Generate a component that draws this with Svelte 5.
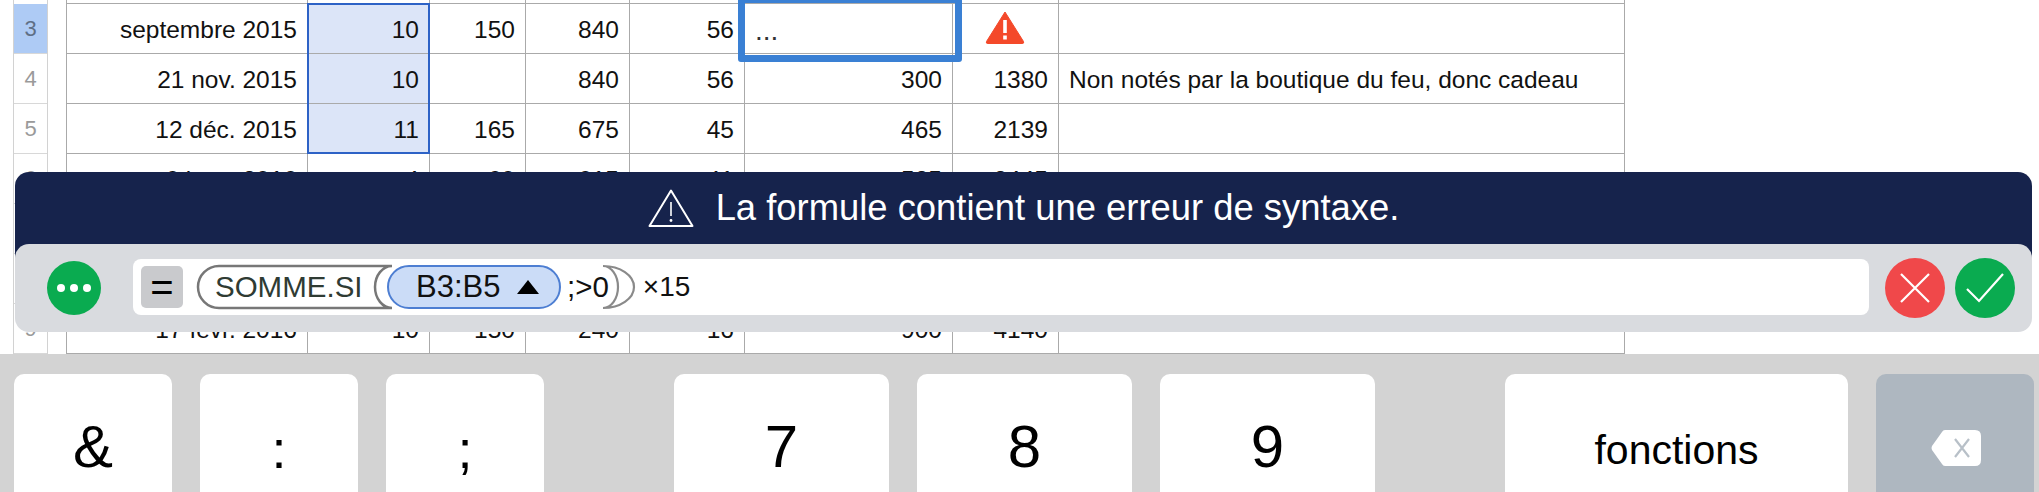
<script>
  const rows = [
    { n: 3, cells: ["septembre 2015", "10", "150", "840", "56", "", "", ""], active: true },
    { n: 4, cells: ["21 nov. 2015", "10", "", "840", "56", "300", "1380", "Non notés par la boutique du feu, donc cadeau"] },
    { n: 5, cells: ["12 déc. 2015", "11", "165", "675", "45", "465", "2139", ""] },
    { n: 6, cells: ["6 janv. 2016", "4", "60", "615", "41", "525", "2445", ""] },
    { n: 7, cells: ["", "", "", "", "", "", "", ""] },
    { n: 8, cells: ["", "", "", "", "", "", "", ""] },
    { n: 9, cells: ["17 févr. 2016", "10", "150", "240", "16", "900", "4140", ""] }
  ];
  const blank = ["", "", "", "", "", "", "", ""];
</script>

<div class="screen">
  <section class="sheet">
    <div class="gutter">
      <div class="gutter-cap"></div>
      {#each rows as r}
        <div class="rownum" class:active={r.active}>{r.n}</div>
      {/each}
    </div>

    <div class="table">
      <div class="row cap">
        {#each blank as _}<div class="cell"></div>{/each}
      </div>
      {#each rows as r, ri}
        <div class="row">
          {#each r.cells as c, i}
            <div class="cell" class:picked={i === 1 && ri < 3} class:note={i === 7}>
              {#if r.active && i === 6}
                <svg class="alert" width="40" height="33" viewBox="0 0 40 33">
                  <path d="M20 1 L38.5 30.5 Q39.5 32.5 37 32.5 H3 Q0.5 32.5 1.5 30.5 Z" fill="#f4492a" stroke="#f4492a" stroke-linejoin="round" />
                  <rect x="18.2" y="9" width="3.6" height="13" fill="#fff" />
                  <rect x="18.2" y="24.5" width="3.6" height="4" fill="#fff" />
                </svg>
              {:else}
                {c}
              {/if}
            </div>
          {/each}
        </div>
      {/each}
      <div class="range"></div>
      <div class="editing"><span>...</span></div>
    </div>

    <div class="panel">
      <div class="message">
        <svg width="46" height="38" viewBox="0 0 46 38">
          <path d="M23 1.5 L44.5 37 H1.5 Z" fill="none" stroke="#fff" stroke-width="2" stroke-linejoin="round" />
          <path d="M23 13 V27" stroke="#fff" stroke-width="1.6" />
          <circle cx="23" cy="31.5" r="1.4" fill="#fff" />
        </svg>
        <span>La formule contient une erreur de syntaxe.</span>
      </div>
      <div class="bar">
        <button class="more" aria-label="Plus"><i></i><i></i><i></i></button>
        <div class="input">
          <span class="eq">=</span>
          <span class="fn">
            <svg width="196" height="46" viewBox="0 0 196 46">
              <path d="M23 2 H196 A17 21 0 0 0 196 44 H23 A21 21 0 0 1 23 2 Z" fill="#fff" stroke="#777" stroke-width="2.5" />
            </svg>
            <span>SOMME.SI</span>
          </span>
          <span class="ref">B3:B5 <svg width="22" height="14" viewBox="0 0 22 14"><path d="M11 0 L22 14 H0 Z" fill="#000" /></svg></span>
          <span class="arg">;&gt;0</span>
          <svg class="close" width="36" height="46" viewBox="0 0 36 46">
            <path d="M2 2 A31 21 0 0 1 2 44 A15 21 0 0 0 2 2 Z" fill="none" stroke="#8a8a8a" stroke-width="2.2" />
          </svg>
          <span class="tail">×15</span>
        </div>
        <button class="round cancel" aria-label="Annuler">
          <svg width="32" height="32" viewBox="0 0 32 32"><path d="M2 2 L30 30 M30 2 L2 30" stroke="#fff" stroke-width="2.2" /></svg>
        </button>
        <button class="round ok" aria-label="Valider">
          <svg width="40" height="32" viewBox="0 0 40 32"><path d="M2 17 L14 29 L38 2" fill="none" stroke="#fff" stroke-width="2.2" /></svg>
        </button>
      </div>
    </div>
  </section>

  <section class="keyboard">
    <div class="group">
      <div class="key amp">&amp;</div>
      <div class="key sym">:</div>
      <div class="key sym">;</div>
    </div>
    <div class="group">
      <div class="key num">7</div>
      <div class="key num">8</div>
      <div class="key num">9</div>
    </div>
    <div class="group">
      <div class="key fx">fonctions</div>
      <div class="key del">
        <svg width="50" height="36" viewBox="0 0 50 36">
          <path d="M14 0 H44 Q50 0 50 6 V30 Q50 36 44 36 H14 Q12 36 11 34 L1 20 Q0 18 1 16 L11 2 Q12 0 14 0 Z" fill="#fff" />
          <path d="M24 9 L38 27 M38 9 L24 27" stroke="#b8c0c8" stroke-width="2.2" />
        </svg>
      </div>
    </div>
  </section>
</div>

<style>
  :global(body) {
    margin: 0;
    background: #fff;
  }

  .screen {
    width: 2039px;
    height: 492px;
    overflow: hidden;
    display: flex;
    flex-direction: column;
    font-family: "Liberation Sans", Arial, sans-serif;
  }

  .sheet {
    position: relative;
    height: 354px;
    flex: none;
    display: flex;
    overflow: hidden;
    background: #fff;
  }

  .gutter {
    width: 33px;
    margin-left: 13px;
    margin-right: 18px;
    border-left: 1px solid #d2d2d2;
    border-right: 1px solid #d2d2d2;
    flex: none;
  }
  .gutter-cap {
    height: 4px;
  }
  .rownum {
    height: 49px;
    border-bottom: 1px solid #d8d8d8;
    display: flex;
    align-items: center;
    justify-content: center;
    font-size: 22px;
    color: #9a9a9a;
  }
  .rownum.active {
    background: #aecbf5;
    color: #5f6f85;
  }

  .table {
    position: relative;
    width: 1559px;
    border-left: 1px solid #aaa;
    box-sizing: content-box;
    flex: none;
  }
  .row {
    display: grid;
    grid-template-columns: 241px 122px 96px 104px 115px 208px 106px 566px;
    height: 50px;
    font-size: 24.5px;
    color: #111;
  }
  .row.cap {
    height: 4px;
  }
  .cell {
    box-sizing: border-box;
    border-right: 1px solid #aaa;
    border-bottom: 1px solid #aaa;
    padding: 2px 10px 0;
    display: flex;
    align-items: center;
    justify-content: flex-end;
    white-space: nowrap;
  }
  .row.cap .cell {
    padding: 0;
  }
  .cell.picked {
    background: #dce5f8;
  }
  .cell.note {
    justify-content: flex-start;
  }
  .alert {
    margin: 0 auto;
    transform: translate(-1px, -2px);
  }

  .range {
    position: absolute;
    left: 240px;
    top: 3px;
    width: 123px;
    height: 151px;
    box-sizing: border-box;
    border: 2px solid #2d62c6;
  }
  .editing {
    position: absolute;
    left: 671px;
    top: -4px;
    width: 224px;
    height: 66px;
    box-sizing: border-box;
    border: 7px solid #3a80d4;
    border-radius: 3px;
    font-size: 28px;
    color: #333;
    display: flex;
    align-items: center;
    padding: 4px 0 0 10px;
  }

  .panel {
    position: absolute;
    left: 15px;
    top: 172px;
    width: 2017px;
  }
  .message {
    height: 72px;
    padding-bottom: 14px;
    background: #16234c;
    border-radius: 14px 14px 0 0;
    color: #fff;
    font-size: 36.4px;
    display: flex;
    align-items: center;
    justify-content: center;
    gap: 22px;
    box-sizing: content-box;
  }
  .bar {
    position: relative;
    margin-top: -14px;
    height: 88px;
    background: #d9dbdf;
    border-radius: 14px;
    display: flex;
    align-items: center;
    padding: 0 17px 0 32px;
    box-sizing: border-box;
  }
  button {
    border: 0;
    padding: 0;
    display: flex;
    align-items: center;
    justify-content: center;
    flex: none;
  }
  .more {
    width: 54px;
    height: 54px;
    border-radius: 50%;
    background: #0aab50;
    gap: 5px;
    margin-right: 32px;
  }
  .more i {
    width: 8px;
    height: 8px;
    border-radius: 50%;
    background: #fff;
  }
  .input {
    flex: 1;
    height: 56px;
    margin-top: -2px;
    background: #fff;
    border-radius: 8px;
    display: flex;
    align-items: center;
    padding-left: 8px;
    font-size: 29.5px;
    color: #111;
    margin-right: 16px;
  }
  .eq {
    width: 42px;
    height: 42px;
    background: #c9cacd;
    border-radius: 5px;
    font-size: 40px;
    line-height: 42px;
    text-align: center;
    color: #000;
    margin-right: 13px;
    flex: none;
  }
  .fn {
    position: relative;
    width: 196px;
    height: 46px;
    display: flex;
    align-items: center;
    flex: none;
    color: #2f3b33;
  }
  .fn svg {
    position: absolute;
    left: 0;
    top: 0;
  }
  .fn span {
    position: relative;
    margin-left: 19px;
  }
  .ref {
    position: relative;
    margin-left: -5px;
    width: 174px;
    height: 44px;
    box-sizing: border-box;
    border: 2px solid #4d7ed2;
    border-radius: 22px;
    background: #cbdcf7;
    display: flex;
    align-items: center;
    padding-left: 27px;
    gap: 17px;
    font-size: 31px;
    flex: none;
  }
  .arg {
    margin-left: 6px;
    position: relative;
    z-index: 1;
  }
  .close {
    margin-left: -8px;
    flex: none;
  }
  .tail {
    margin-left: 6px;
    font-size: 28px;
  }
  .round {
    width: 60px;
    height: 60px;
    border-radius: 50%;
  }
  .cancel {
    background: #f0484a;
    margin-right: 10px;
  }
  .ok {
    background: #0aab50;
  }

  .keyboard {
    flex: 1;
    background: #d3d3d3;
    display: flex;
    gap: 130px;
    padding: 20px 0 0 14px;
  }
  .group {
    display: flex;
    gap: 28px;
  }
  .key {
    background: #fff;
    border-radius: 10px 10px 0 0;
    display: flex;
    justify-content: center;
    color: #000;
  }
  .amp {
    width: 158px;
    font-size: 60px;
    padding-top: 38px;
    line-height: 70px;
  }
  .sym {
    width: 158px;
    font-size: 54px;
    padding-top: 40px;
    line-height: 70px;
  }
  .num {
    width: 215px;
    font-size: 60px;
    padding-top: 38px;
    line-height: 70px;
  }
  .fx {
    width: 343px;
    font-size: 41px;
    padding-top: 51px;
    line-height: 50px;
  }
  .del {
    width: 158px;
    background: #aeb7c0;
    padding: 56px 0 0 2px;
    box-sizing: border-box;
  }
</style>
